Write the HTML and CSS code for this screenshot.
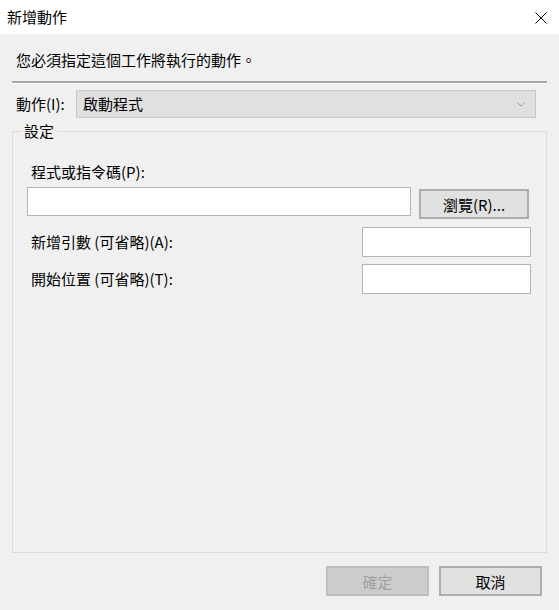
FILE: index.html
```html
<!DOCTYPE html>
<html lang="zh-Hant">
<head>
    <meta charset="UTF-8">
    <meta name="viewport" content="width=device-width, initial-scale=1.0">
    <title>新增動作</title>
    <link rel="stylesheet" href="styles.css">
</head>
<body>

<header class="titlebar">
    <span class="title">新增動作</span>
    <span class="close">
        <svg width="12" height="12" viewBox="0 0 12 12"><path d="M0.5 0.5 L11.5 11.5 M11.5 0.5 L0.5 11.5" stroke="#000" stroke-width="1" fill="none"/></svg>
    </span>
</header>

<div class="dialog">
    <p class="prompt">您必須指定這個工作將執行的動作。</p>
    <div class="separator"></div>

    <div class="action-row">
        <span class="label">動作(I):</span>
        <div class="select">
            <span>啟動程式</span>
            <svg width="8" height="5" viewBox="0 0 8 5"><path d="M0.5 0.5 L4 4 L7.5 0.5" stroke="#9a9a9a" stroke-width="1" fill="none"/></svg>
        </div>
    </div>

    <fieldset class="group">
        <legend>設定</legend>
        <div class="field-label">程式或指令碼(P):</div>
        <div class="row program">
            <input type="text" class="textbox wide">
            <button class="btn browse">瀏覽(R)...</button>
        </div>
        <div class="row">
            <span class="field-label">新增引數 (可省略)(A):</span>
            <input type="text" class="textbox short">
        </div>
        <div class="row">
            <span class="field-label">開始位置 (可省略)(T):</span>
            <input type="text" class="textbox short">
        </div>
    </fieldset>

    <div class="buttons">
        <button class="btn" disabled>確定</button>
        <button class="btn">取消</button>
    </div>
</div>

</body>
</html>
```

FILE: styles.css
```css
body {
    margin: 0;
    padding: 0;
    background-color: #f0f0f0; /* dialog face color */
    color: #000;
    font-family: "Noto Sans CJK TC", sans-serif;
    font-size: 15px;
    line-height: 20px;
}
.titlebar {
    height: 34px;
    background-color: #fff;
    display: flex;
    align-items: center;
    justify-content: space-between;
    padding: 0 12px 0 7px;
}
.close {
    display: flex;
    margin-top: 2px;
}
.dialog {
    padding: 0 12px;
}
.prompt {
    margin: 16px 0 0 4px;
}
.separator {
    margin-top: 11px;
    height: 2px;
    background-color: #a8a8a8;
    border-bottom: 1px solid #fff;
}
.action-row {
    display: flex;
    align-items: center;
    margin-top: 6px;
}
.action-row .label {
    width: 64px;
    padding-left: 4px;
}
.select {
    height: 26px;
    width: 442px;
    background-color: #e0e0e0;
    border: 1px solid #c8c8c8;
    display: flex;
    align-items: center;
    justify-content: space-between;
    padding: 0 10px 0 6px;
    margin-left: -4px;
}
.group {
    margin: 3px 0 0 0;
    padding: 21px 15px 0 14px;
    border: 1px solid #dcdcdc;
    height: 432px;
    box-sizing: border-box;
}
.group legend {
    padding: 0 3px;
    margin-left: -6px;
}
.field-label {
    padding-left: 4px;
}
.row {
    display: flex;
    align-items: center;
    justify-content: space-between;
    margin-top: 8px;
}
.row.program {
    margin-top: 5px;
    align-items: flex-start;
}
.row:last-child {
    margin-top: 7px;
}
.textbox {
    height: 29px;
    border: 1px solid #b4b4b4;
    background-color: #fff;
    box-sizing: border-box;
    margin: 0;
    padding: 0 4px;
}
.textbox.wide {
    width: 384px;
}
.textbox.short {
    width: 169px;
    height: 30px;
}
.btn {
    font-family: inherit;
    font-size: 15px;
    color: #000;
    background-color: #e1e1e1;
    border: 2px solid #adadad;
    width: 103px;
    height: 30px;
    padding: 0;
    margin: 0;
}
.btn:disabled {
    background-color: #cccccc;
    border-color: #bfbfbf;
    color: #a0a0a0;
}
.browse {
    width: 110px;
    margin: 2px 2px 0 0;
}
.buttons {
    display: flex;
    justify-content: flex-end;
    gap: 10px;
    margin: 13px 5px 0 0;
}
```
